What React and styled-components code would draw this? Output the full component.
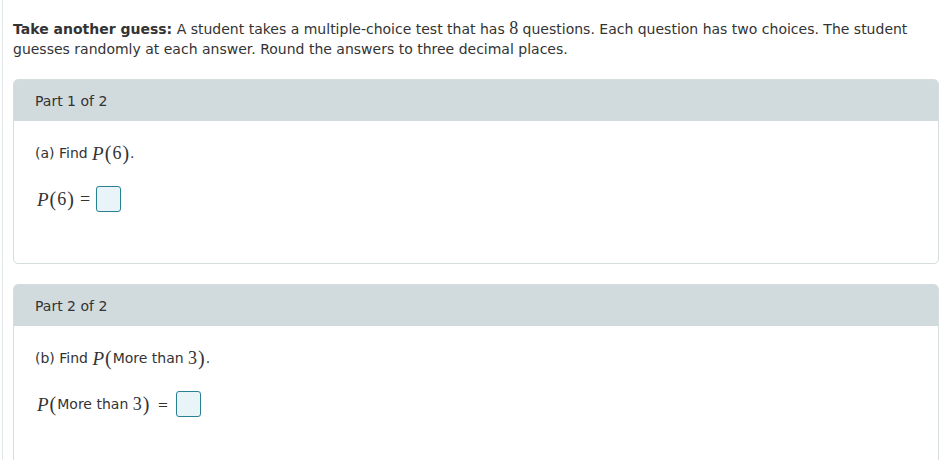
import { createGlobalStyle, styled } from "styled-components";

const GlobalStyle = createGlobalStyle`
    body {
        margin: 0;
        background: #ffffff;
        font-family: "DejaVu Sans", Verdana, sans-serif;
        color: #333333;
    }
`;

export default function App() {
    return (
        <>
            <GlobalStyle />
            <Page>
                <Intro>
                    <b>Take another guess:</b> A student takes a multiple-choice test that has <Num>8</Num> questions. Each question has two choices. The student guesses randomly at each answer. Round the answers to three decimal places.
                </Intro>

                <Card>
                    <CardHeader>Part 1 of 2</CardHeader>
                    <CardBody>
                        <Line>
                            (a) Find <Var>P</Var><Paren>(</Paren><Num>6</Num><Paren>)</Paren>.
                        </Line>
                        <Line answer>
                            <Var>P</Var><Paren>(</Paren><Num>6</Num><Paren>)</Paren><Eq>=</Eq>
                            <AnswerBox />
                        </Line>
                    </CardBody>
                </Card>

                <Card>
                    <CardHeader>Part 2 of 2</CardHeader>
                    <CardBody>
                        <Line>
                            (b) Find <Var>P</Var><Paren>(</Paren>More than <Num>3</Num><Paren>)</Paren>.
                        </Line>
                        <Line answer>
                            <Var>P</Var><Paren>(</Paren>More than <Num>3</Num><Paren>)</Paren><SansEq>=</SansEq>
                            <AnswerBox />
                        </Line>
                    </CardBody>
                </Card>
            </Page>
        </>
    );
}

const Page = styled.div`
    margin-left: 2px;
    border-left: 1px solid #e3e8e9;
    padding: 19px 9px 0 10px;
    height: 460px;
    overflow: hidden;
    box-sizing: border-box;
`;

const Intro = styled.p`
    margin: 0 0 20px 0;
    font-size: 14px;
    line-height: 20px;
    max-width: 915px;

    b {
        font-weight: bold;
    }
`;

const Num = styled.span`
    font-family: "Liberation Serif", "DejaVu Serif", serif;
    font-size: 18px;
    line-height: 1;
`;

const Var = styled.span`
    font-family: "Liberation Serif", "DejaVu Serif", serif;
    font-style: italic;
    font-size: 19px;
    line-height: 1;
`;

const Paren = styled.span`
    font-family: "Liberation Serif", "DejaVu Serif", serif;
    font-size: 20px;
    line-height: 1;
    margin: 0 1px;
`;

const Eq = styled.span`
    font-family: "Liberation Serif", "DejaVu Serif", serif;
    font-size: 18px;
    line-height: 1;
    margin: 0 6px 0 5px;
`;

const SansEq = styled.span`
    font-size: 13px;
    margin: 0 8px 0 7px;
`;

const Card = styled.section`
    border: 1px solid #d6dddf;
    border-radius: 5px;
    overflow: hidden;
    margin-bottom: 20px;
`;

const CardHeader = styled.div`
    height: 41px;
    background: #d1dadd;
    display: flex;
    align-items: center;
    padding-left: 21px;
    font-size: 14px;
    color: #333333;
`;

const CardBody = styled.div`
    padding: 18px 21px 50px 21px;
    display: flex;
    flex-direction: column;
    gap: 18px;
`;

const Line = styled.div`
    display: flex;
    align-items: center;
    font-size: 14px;
    height: 28px;
    white-space: pre;
    padding-left: ${props => props.answer ? "2px" : "0"};
`;

const AnswerBox = styled.span`
    display: inline-block;
    width: 23px;
    height: 24px;
    border: 1px solid #2a8093;
    border-radius: 3px;
    background: #e8f4f8;
`;
